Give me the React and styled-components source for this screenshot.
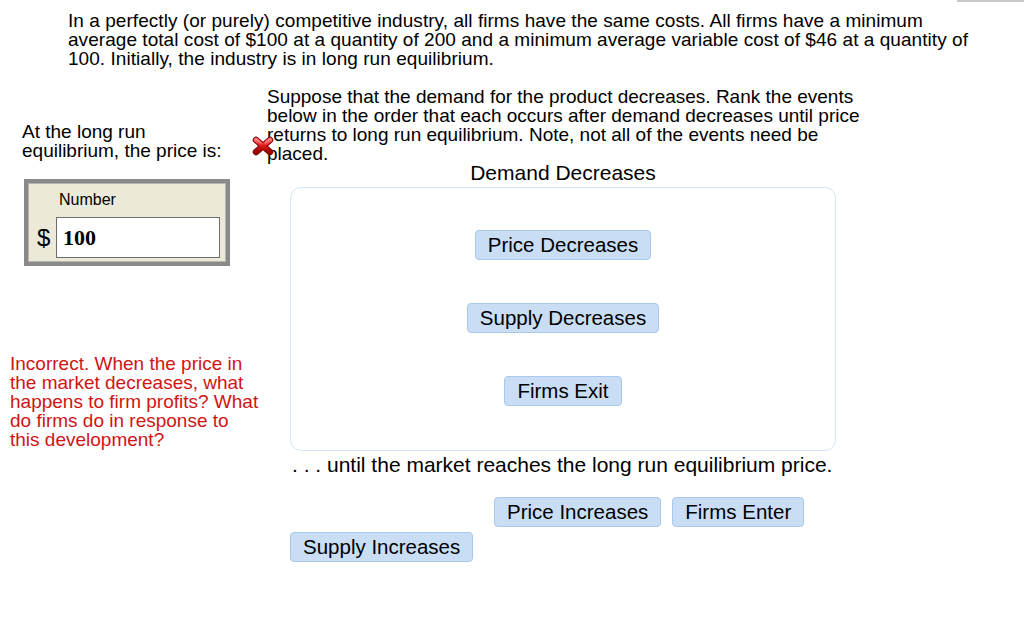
import React from 'react';
import styled, { createGlobalStyle } from 'styled-components';

const GlobalStyle = createGlobalStyle`
  body {
    margin: 0;
    background: #fff;
    font-family: "Liberation Sans", Arial, sans-serif;
    color: #000;
  }
`

const Page = styled.div`
  position: relative;
  width: 1024px;
  height: 624px;
  overflow: hidden;
`
const TopRule = styled.div`
  position: absolute;
  top: 0;
  right: 0;
  width: 67px;
  height: 2px;
  background: #c8c8c8;
`
const Intro = styled.p`
  margin: 0;
  padding: 11px 0 0 68px;
  font-size: 19px;
  line-height: 19px;
  letter-spacing: 0.05px;
  white-space: nowrap;
`
const Body = styled.div`
  display: grid;
  grid-template-columns: 267px 620px;
  margin-top: 19px;
`
const Left = styled.div`
  display: flex;
  flex-direction: column;
`
const Prompt = styled.div`
  margin: 35px 0 0 22px;
  font-size: 19px;
  line-height: 19px;
`
const NumberBox = styled.div`
  margin: 19px 0 0 24px;
  width: 198px;
  height: 79px;
  background: #ece9d8;
  border: 4px solid #8a8a8a;
  box-shadow: inset 0 0 0 1px #b4b4ac;
  display: flex;
  flex-direction: column;
`
const NumberLabel = styled.div`
  margin: 8px 0 0 31px;
  font-size: 16px;
  line-height: 18px;
`
const InputRow = styled.div`
  display: flex;
  align-items: center;
  margin-top: 8px;
  gap: 5px;
  padding-left: 9px;
`
const Dollar = styled.span`
  font-size: 24px;
  width: 14px;
`
const Input = styled.div`
  width: 156px;
  height: 39px;
  border: 1px solid #6e6e6e;
  background: #fff;
  display: flex;
  align-items: center;
  padding-left: 6px;
  font-family: "Liberation Serif", "Times New Roman", serif;
  font-weight: bold;
  font-size: 22px;
`
const Feedback = styled.div`
  margin: 88px 0 0 10px;
  color: #cf1414;
  font-size: 19px;
  line-height: 19px;
  white-space: nowrap;
`
const Right = styled.div`
  position: relative;
  display: flex;
  flex-direction: column;
`
const Question = styled.p`
  margin: 0;
  font-size: 19px;
  line-height: 19px;
  white-space: nowrap;
`
const WrongMark = styled.svg`
  position: absolute;
  left: -15px;
  top: 49px;
`
const ZoneTitle = styled.div`
  margin: 0 0 4px 23px;
  width: 546px;
  text-align: center;
  font-size: 21px;
  line-height: 20px;
`
const DropZone = styled.div`
  margin-left: 23px;
  width: 544px;
  height: 220px;
  border: 1px solid #d4e4f4;
  border-radius: 11px;
  display: flex;
  flex-direction: column;
  align-items: center;
  gap: 43px;
  padding-top: 42px;
`
const Chip = styled.div`
  height: 28px;
  padding: 0 12px;
  background: #c9def5;
  border: 1px solid #a9c8ec;
  border-radius: 4px;
  display: flex;
  align-items: center;
  font-size: 20.5px;
  white-space: nowrap;
`
const Until = styled.div`
  margin: 4px 0 0 25px;
  font-size: 21px;
  line-height: 20px;
  white-space: nowrap;
`
const Pool = styled.div`
  margin: 22px 0 0 23px;
  display: flex;
  flex-direction: column;
  gap: 5px;
`
const PoolRow = styled.div`
  display: flex;
  gap: 11px;
  padding-left: ${p => p.$indent || 0}px;
`

const placed = ['Price Decreases', 'Supply Decreases', 'Firms Exit']

const App = () => {
  return (
    <Page>
      <GlobalStyle />
      <TopRule />
      <Intro>
        In a perfectly (or purely) competitive industry, all firms have the same costs. All firms have a minimum<br />
        average total cost of $100 at a quantity of 200 and a minimum average variable cost of $46 at a quantity of<br />
        100. Initially, the industry is in long run equilibrium.
      </Intro>
      <Body>
        <Left>
          <Prompt>At the long run<br />equilibrium, the price is:</Prompt>
          <NumberBox>
            <NumberLabel>Number</NumberLabel>
            <InputRow>
              <Dollar>$</Dollar>
              <Input>100</Input>
            </InputRow>
          </NumberBox>
          <Feedback>
            Incorrect. When the price in<br />
            the market decreases, what<br />
            happens to firm profits? What<br />
            do firms do in response to<br />
            this development?
          </Feedback>
        </Left>
        <Right>
          <Question>
            Suppose that the demand for the product decreases. Rank the events<br />
            below in the order that each occurs after demand decreases until price<br />
            returns to long run equilibrium. Note, not all of the events need be<br />
            placed.
          </Question>
          <WrongMark width="22" height="20" viewBox="0 0 22 20">
            <defs>
              <linearGradient id="xr" x1="0" y1="0" x2="0" y2="1">
                <stop offset="0" stopColor="#ff7070" />
                <stop offset="0.45" stopColor="#e01c1c" />
                <stop offset="1" stopColor="#9a0000" />
              </linearGradient>
            </defs>
            <path d="M4 4 L18 16 M18 4 L4 16" stroke="#7a0000" strokeWidth="6.5" strokeLinecap="round" />
            <path d="M4 4 L18 16 M18 4 L4 16" stroke="url(#xr)" strokeWidth="4.5" strokeLinecap="round" />
            <path d="M4.5 3.5 L9 7.5 M17.5 3.5 L13 7.5" stroke="#ffb0b0" strokeWidth="1" strokeLinecap="round" opacity="0.7" />
          </WrongMark>
          <ZoneTitle>Demand Decreases</ZoneTitle>
          <DropZone>
            {placed.map(p => <Chip key={p}>{p}</Chip>)}
          </DropZone>
          <Until>. . . until the market reaches the long run equilibrium price.</Until>
          <Pool>
            <PoolRow $indent={204}>
              <Chip>Price Increases</Chip>
              <Chip>Firms Enter</Chip>
            </PoolRow>
            <PoolRow>
              <Chip>Supply Increases</Chip>
            </PoolRow>
          </Pool>
        </Right>
      </Body>
    </Page>
  )
}
export default App
